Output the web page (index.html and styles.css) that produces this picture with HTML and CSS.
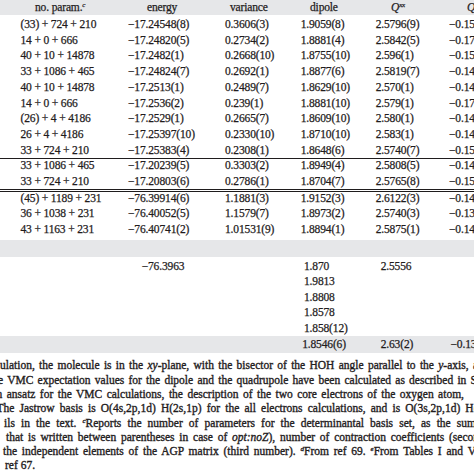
FILE: index.html
```html
<!DOCTYPE html>
<html>
<head>
<meta charset="utf-8">
<link rel="stylesheet" href="styles.css">
</head>
<body>
<div class="page">
  <div class="row head">
    <div class="sp"></div>
    <div class="c h1">no. param.<sup><i>c</i></sup></div>
    <div class="c h2">energy</div>
    <div class="c h3">variance</div>
    <div class="c h4">dipole</div>
    <div class="c h5"><i>Q</i><sup><i>xx</i></sup></div>
    <div class="c h6"><i>Q</i><sup><i>yy</i></sup></div>
  </div>

  <div class="body">
    <div class="row"><div class="sp"></div><div class="c">(33) + 724 + 210</div><div class="c">−17.24548(8)</div><div class="c">0.3606(3)</div><div class="c">1.9059(8)</div><div class="c">2.5796(9)</div><div class="c">−0.1574(9)</div></div>
    <div class="row"><div class="sp"></div><div class="c">14 + 0 + 666</div><div class="c">−17.24820(5)</div><div class="c">0.2734(2)</div><div class="c">1.8881(4)</div><div class="c">2.5842(5)</div><div class="c">−0.1715(5)</div></div>
    <div class="row"><div class="sp"></div><div class="c">40 + 10 + 14878</div><div class="c">−17.2482(1)</div><div class="c">0.2668(10)</div><div class="c">1.8755(10)</div><div class="c">2.596(1)</div><div class="c">−0.155(1)</div></div>
    <div class="row"><div class="sp"></div><div class="c">33 + 1086 + 465</div><div class="c">−17.24824(7)</div><div class="c">0.2692(1)</div><div class="c">1.8877(6)</div><div class="c">2.5819(7)</div><div class="c">−0.1489(7)</div></div>
    <div class="row"><div class="sp"></div><div class="c">40 + 10 + 14878</div><div class="c">−17.2513(1)</div><div class="c">0.2489(7)</div><div class="c">1.8629(10)</div><div class="c">2.570(1)</div><div class="c">−0.146(1)</div></div>
    <div class="row"><div class="sp"></div><div class="c">14 + 0 + 666</div><div class="c">−17.2536(2)</div><div class="c">0.239(1)</div><div class="c">1.8881(10)</div><div class="c">2.579(1)</div><div class="c">−0.172(1)</div></div>
    <div class="row"><div class="sp"></div><div class="c">(26) + 4 + 4186</div><div class="c">−17.2529(1)</div><div class="c">0.2665(7)</div><div class="c">1.8609(10)</div><div class="c">2.580(1)</div><div class="c">−0.144(1)</div></div>
    <div class="row"><div class="sp"></div><div class="c">26 + 4 + 4186</div><div class="c">−17.25397(10)</div><div class="c">0.2330(10)</div><div class="c">1.8710(10)</div><div class="c">2.583(1)</div><div class="c">−0.146(1)</div></div>
    <div class="row"><div class="sp"></div><div class="c">33 + 724 + 210</div><div class="c">−17.25383(4)</div><div class="c">0.2308(1)</div><div class="c">1.8648(6)</div><div class="c">2.5740(7)</div><div class="c">−0.1520(7)</div></div>

    <div class="rule"></div>

    <div class="row"><div class="sp"></div><div class="c">33 + 1086 + 465</div><div class="c">−17.20239(5)</div><div class="c">0.3303(2)</div><div class="c">1.8949(4)</div><div class="c">2.5808(5)</div><div class="c">−0.1469(5)</div></div>
    <div class="row"><div class="sp"></div><div class="c">33 + 724 + 210</div><div class="c">−17.20803(6)</div><div class="c">0.2786(1)</div><div class="c">1.8704(7)</div><div class="c">2.5765(8)</div><div class="c">−0.1519(8)</div></div>

    <div class="rule double"></div>

    <div class="row"><div class="sp"></div><div class="c">(45) + 1189 + 231</div><div class="c">−76.39914(6)</div><div class="c">1.1881(3)</div><div class="c">1.9152(3)</div><div class="c">2.6122(3)</div><div class="c">−0.1412(3)</div></div>
    <div class="row"><div class="sp"></div><div class="c">36 + 1038 + 231</div><div class="c">−76.40052(5)</div><div class="c">1.1579(7)</div><div class="c">1.8973(2)</div><div class="c">2.5740(3)</div><div class="c">−0.1322(3)</div></div>
    <div class="row"><div class="sp"></div><div class="c">43 + 1163 + 231</div><div class="c">−76.40741(2)</div><div class="c">1.01531(9)</div><div class="c">1.8894(1)</div><div class="c">2.5875(1)</div><div class="c">−0.1419(1)</div></div>

    <div class="band"></div>

    <div class="row ref"><div class="sp"></div><div class="c"></div><div class="c e2">−76.3963</div><div class="c"></div><div class="c d2">1.870</div><div class="c q2">2.5556</div><div class="c"></div></div>
    <div class="row ref"><div class="sp"></div><div class="c"></div><div class="c"></div><div class="c"></div><div class="c d2">1.9813</div><div class="c"></div><div class="c"></div></div>
    <div class="row ref"><div class="sp"></div><div class="c"></div><div class="c"></div><div class="c"></div><div class="c d2">1.8808</div><div class="c"></div><div class="c"></div></div>
    <div class="row ref"><div class="sp"></div><div class="c"></div><div class="c"></div><div class="c"></div><div class="c d2">1.8578</div><div class="c"></div><div class="c"></div></div>
    <div class="row ref"><div class="sp"></div><div class="c"></div><div class="c"></div><div class="c"></div><div class="c d2">1.858(12)</div><div class="c"></div><div class="c"></div></div>

    <div class="row expt"><div class="sp"></div><div class="c"></div><div class="c"></div><div class="c"></div><div class="c d3">1.8546(6)</div><div class="c q2">2.63(2)</div><div class="c m2">−0.13(3)</div></div>
  </div>

  <div class="notes">
    <div class="ln l1">ulation, the molecule is in the <i>xy</i>-plane, with the bisector of the HOH angle parallel to the <i>y</i>-axis, a</div>
    <div class="ln l2">e VMC expectation values for the dipole and the quadrupole have been calculated as described in S</div>
    <div class="ln l3">n ansatz for the VMC calculations, the description of the two core electrons of the oxygen atom,</div>
    <div class="ln l4">The Jastrow basis is O(4s,2p,1d) H(2s,1p) for the all electrons calculations, and is O(3s,2p,1d) H(</div>
    <div class="ln l5">ils in the text. <sup><i>c</i></sup>Reports the number of parameters for the determinantal basis set, as the sum</div>
    <div class="ln l6">that is written between parentheses in case of <i>opt:noZ</i>), number of contraction coefficients (secon</div>
    <div class="ln l7">the independent elements of the AGP matrix (third number). <sup><i>d</i></sup>From ref 69. <sup><i>e</i></sup>From Tables I and V</div>
    <div class="ln l8">ref 67.</div>
  </div>
</div>
</body>
</html>
```

FILE: styles.css
```css
html, body {
  margin: 0;
  padding: 0;
  background: #ffffff;
  overflow: hidden;
}

.page {
  width: 474px;
  height: 474px;
  overflow: hidden;
  font-family: "Liberation Serif", "Times New Roman", serif;
  font-size: 11.5px;
  letter-spacing: -0.15px;
  color: #1f1c1d;
  -webkit-text-stroke: 0.25px #1f1c1d;
}

sup {
  font-size: 7px;
  line-height: 0;
  vertical-align: 4px;
}

.row {
  display: grid;
  grid-template-columns: 20.5px 107.5px 97px 75.7px 75px 73.3px 80px;
  height: 15.71px;
  line-height: 15.71px;
  white-space: nowrap;
}

.head {
  height: 15px;
  line-height: 15px;
  background: #e6e7e9;
}

.h1 { padding-left: 14.5px; }
.h2 { padding-left: 19px; }
.h3 { padding-left: 5px; }
.h4 { padding-left: 9.3px; }
.h5 { padding-left: 15.3px; }
.h6 { padding-left: 18px; }

.body {
  padding-top: 2px;
}

.rule {
  height: 1.6px;
  background: #1f1c1d;
  margin: -0.5px 0 -1.1px;
}

.rule.double {
  height: 1px;
  background: transparent;
  border-top: 1px solid #1f1c1d;
  border-bottom: 1px solid #1f1c1d;
  margin: -1px 0 -1px;
}

.band {
  height: 17px;
  margin-top: 2px;
  background: #e6e7e9;
}

.row.ref {
  height: 15.5px;
  line-height: 15.5px;
}

.band + .row.ref {
  margin-top: 2px;
}

.e2 { padding-left: 13.7px; }
.d2 { padding-left: 3.3px; }
.d3 { padding-left: 1.5px; }
.q2 { padding-left: 5px; }
.m2 { padding-left: 1.5px; }

.row.expt {
  height: 17px;
  line-height: 17px;
  background: #e6e7e9;
}

.notes {
  margin-top: 5px;
  line-height: 14.3px;
  font-size: 11.5px;
  letter-spacing: 0;
  -webkit-text-stroke: 0.35px #1f1c1d;
}

.ln {
  white-space: nowrap;
  text-align: justify;
  text-align-last: justify;
}

.l1 { margin-left: 0; width: 478px; }
.l2 { margin-left: -2px; width: 479px; }
.l3 { margin-left: -3.5px; width: 467.5px; }
.l4 { margin-left: -3.5px; width: 481px; }
.l5 { margin-left: 4px; width: 472px; }
.l6 { margin-left: 6px; width: 473px; }
.l7 { margin-left: 3px; width: 473px; }
.l8 { margin-left: 5px; text-align: left; text-align-last: left; }
```
